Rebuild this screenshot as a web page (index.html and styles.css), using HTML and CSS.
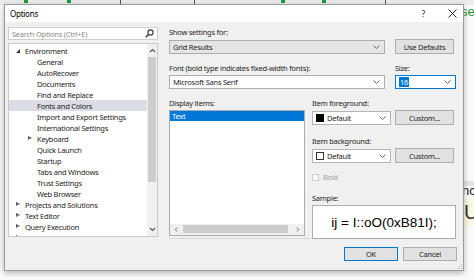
FILE: index.html
```html
<!DOCTYPE html>
<html lang="en">
<head>
  <meta charset="UTF-8">
  <title>Options</title>
  <link rel="stylesheet" href="styles.css">
</head>
<body>
  <div class="desktop">
    <!-- app behind the dialog -->
    <div class="bg-top">
      <span class="bg-mark" style="left:24px"></span>
      <span class="bg-mark" style="left:67px"></span>
      <span class="bg-line" style="left:120px"></span>
      <span class="bg-line" style="left:194px"></span>
      <span class="bg-mark" style="left:281px"></span>
      <span class="bg-mark" style="left:322px"></span>
      <span class="bg-line" style="left:385px"></span>
    </div>
    <span class="bg-se">se</span>
    <span class="bg-band"></span>
    <span class="bg-nc">nc</span>
    <span class="bg-u">U</span>

    <div class="dialog">
      <div class="titlebar">
        <span class="title">Options</span>
        <span class="help">?</span>
        <svg class="close" width="9" height="9" viewBox="0 0 9 9"><path d="M0.5 0.5L8.5 8.5M8.5 0.5L0.5 8.5" stroke="#222" stroke-width="1"/></svg>
      </div>

      <div class="content">
        <div class="nav">
          <div class="search">
            <span class="search-hint">Search Options (Ctrl+E)</span>
            <svg class="search-icon" width="9" height="9" viewBox="0 0 9 9"><circle cx="5.5" cy="3.5" r="2.6" fill="none" stroke="#333" stroke-width="1.1"/><path d="M3.6 5.4L0.8 8.2" stroke="#333" stroke-width="1.4"/></svg>
          </div>
          <div class="tree">
            <ul class="tree-list">
              <li class="lvl0"><span class="exp exp-open"></span>Environment</li>
              <li class="lvl1"><span class="exp"></span>General</li>
              <li class="lvl1"><span class="exp"></span>AutoRecover</li>
              <li class="lvl1"><span class="exp"></span>Documents</li>
              <li class="lvl1"><span class="exp"></span>Find and Replace</li>
              <li class="lvl1 selected"><span class="exp"></span>Fonts and Colors</li>
              <li class="lvl1"><span class="exp"></span>Import and Export Settings</li>
              <li class="lvl1"><span class="exp"></span>International Settings</li>
              <li class="lvl1"><span class="exp exp-closed"></span>Keyboard</li>
              <li class="lvl1"><span class="exp"></span>Quick Launch</li>
              <li class="lvl1"><span class="exp"></span>Startup</li>
              <li class="lvl1"><span class="exp"></span>Tabs and Windows</li>
              <li class="lvl1"><span class="exp"></span>Trust Settings</li>
              <li class="lvl1"><span class="exp"></span>Web Browser</li>
              <li class="lvl0"><span class="exp exp-closed"></span>Projects and Solutions</li>
              <li class="lvl0"><span class="exp exp-closed"></span>Text Editor</li>
              <li class="lvl0"><span class="exp exp-closed"></span>Query Execution</li>
              <li class="lvl0"><span class="exp exp-closed"></span>Query Results</li>
            </ul>
            <div class="vscroll">
              <svg class="arrow" width="7" height="5" viewBox="0 0 7 5"><path d="M1 4L3.5 1.5L6 4" fill="none" stroke="#555" stroke-width="1.1"/></svg>
              <div class="vtrack"><div class="vthumb"></div></div>
              <svg class="arrow" width="7" height="5" viewBox="0 0 7 5"><path d="M1 1L3.5 3.5L6 1" fill="none" stroke="#555" stroke-width="1.1"/></svg>
            </div>
          </div>
        </div>

        <div class="settings">
          <div class="label">Show settings for:</div>
          <div class="row">
            <div class="combo combo-list combo-wide">
              <span class="combo-text">Grid Results</span>
              <svg class="chev" width="7" height="4" viewBox="0 0 7 4"><path d="M0.5 0.5L3.5 3.5L6.5 0.5" fill="none" stroke="#555" stroke-width="0.9"/></svg>
            </div>
            <button class="btn">Use Defaults</button>
          </div>

          <div class="row row-labels">
            <div class="label combo-wide">Font (bold type indicates fixed-width fonts):</div>
            <div class="label">Size:</div>
          </div>
          <div class="row">
            <div class="combo combo-wide">
              <span class="combo-text">Microsoft Sans Serif</span>
              <svg class="chev" width="7" height="4" viewBox="0 0 7 4"><path d="M0.5 0.5L3.5 3.5L6.5 0.5" fill="none" stroke="#555" stroke-width="0.9"/></svg>
            </div>
            <div class="combo combo-size">
              <span class="combo-text"><span class="sel-text">16</span></span>
              <svg class="chev" width="7" height="4" viewBox="0 0 7 4"><path d="M0.5 0.5L3.5 3.5L6.5 0.5" fill="none" stroke="#555" stroke-width="0.9"/></svg>
            </div>
          </div>

          <div class="lower">
            <div class="items">
              <div class="label">Display items:</div>
              <div class="listbox">
                <div class="list-rows">
                  <div class="list-row selected">Text</div>
                </div>
                <div class="hscroll">
                  <svg width="5" height="7" viewBox="0 0 5 7"><path d="M4 1L1.5 3.5L4 6" fill="none" stroke="#555" stroke-width="1.1"/></svg>
                  <div class="htrack"><div class="hthumb"></div></div>
                  <svg width="5" height="7" viewBox="0 0 5 7"><path d="M1 1L3.5 3.5L1 6" fill="none" stroke="#555" stroke-width="1.1"/></svg>
                </div>
              </div>
              <div class="list-edge"></div>
            </div>

            <div class="colors">
              <div class="label">Item foreground:</div>
              <div class="row">
                <div class="combo combo-color">
                  <span class="swatch swatch-black"></span>
                  <span class="combo-text">Default</span>
                  <svg class="chev" width="7" height="4" viewBox="0 0 7 4"><path d="M0.5 0.5L3.5 3.5L6.5 0.5" fill="none" stroke="#555" stroke-width="0.9"/></svg>
                </div>
                <button class="btn">Custom...</button>
              </div>

              <div class="label label-gap">Item background:</div>
              <div class="row">
                <div class="combo combo-color">
                  <span class="swatch swatch-white"></span>
                  <span class="combo-text">Default</span>
                  <svg class="chev" width="7" height="4" viewBox="0 0 7 4"><path d="M0.5 0.5L3.5 3.5L6.5 0.5" fill="none" stroke="#555" stroke-width="0.9"/></svg>
                </div>
                <button class="btn">Custom...</button>
              </div>

              <label class="check">
                <span class="check-box"></span>
                <span>Bold</span>
              </label>

              <div class="label">Sample:</div>
              <div class="sample">ij = I::oO(0xB81I);</div>
            </div>
          </div>
        </div>
      </div>

      <div class="footer">
        <button class="btn btn-default">OK</button>
        <button class="btn">Cancel</button>
      </div>
      <svg class="grip" width="5" height="5" viewBox="0 0 5 5"><g fill="#b5b5b5"><rect x="4" y="0" width="1" height="1"/><rect x="2" y="2" width="1" height="1"/><rect x="4" y="2" width="1" height="1"/><rect x="0" y="4" width="1" height="1"/><rect x="2" y="4" width="1" height="1"/><rect x="4" y="4" width="1" height="1"/></g></svg>
    </div>
  </div>
</body>
</html>
```

FILE: styles.css
```css
html, body {
  margin: 0;
  padding: 0;
}

body {
  width: 474px;
  height: 280px;
  overflow: hidden;
  background-color: #fbfbfb;
  color: #1e1e1e;
  font-family: 'Noto Sans', 'Open Sans', sans-serif;
  font-size: 7.5px;
  letter-spacing: -0.25px;
}

.desktop {
  position: relative;
  width: 474px;
  height: 280px;
}

/* the window behind */
.bg-top {
  position: absolute;
  left: 0;
  top: 0;
  width: 474px;
  height: 5px;
  background-color: #ececec;
}

.bg-mark {
  position: absolute;
  top: 0;
  width: 4px;
  height: 3px;
  background-color: #1f9d3a;
}

.bg-line {
  position: absolute;
  top: 0;
  width: 1px;
  height: 5px;
  background-color: #555;
}

.bg-se {
  position: absolute;
  left: 461px;
  top: 4px;
  font-family: 'Liberation Sans', sans-serif;
  font-size: 13px;
  letter-spacing: 0;
  color: #2d9c37;
}

.bg-band {
  position: absolute;
  left: 462px;
  top: 181px;
  width: 12px;
  height: 5px;
  background-color: #e4e4e4;
}

.bg-nc {
  position: absolute;
  left: 462px;
  top: 183px;
  font-family: 'Liberation Sans', sans-serif;
  font-size: 13px;
  letter-spacing: 0;
  color: #222;
}

.bg-u {
  position: absolute;
  left: 462px;
  top: 199px;
  width: 12px;
  height: 27px;
  padding-left: 2px;
  background-color: #fafae2;
  font-family: 'Liberation Sans', sans-serif;
  font-size: 20px;
  letter-spacing: 0;
  line-height: 27px;
  color: #333;
}

/* dialog */
.dialog {
  position: absolute;
  left: 4px;
  top: 4px;
  width: 460px;
  height: 267px;
  box-sizing: border-box;
  border: 1px solid #9a9a9a;
  background-color: #f0f0f0;
  box-shadow: 0 2px 6px rgba(0, 0, 0, 0.3);
  display: flex;
  flex-direction: column;
}

.titlebar {
  height: 17px;
  flex: none;
  background-color: #fff;
  display: flex;
  align-items: center;
  padding-left: 5px;
}

.title {
  font-size: 8px;
  color: #000;
  flex: 1;
}

.help {
  font-size: 8.5px;
  color: #222;
  margin-right: 23px;
}

.close {
  margin-right: 6px;
}

.content {
  display: flex;
  gap: 11px;
  padding: 5px 7px 0 3px;
  height: 215px;
  box-sizing: border-box;
  flex: none;
}

.nav {
  width: 150px;
  display: flex;
  flex-direction: column;
  gap: 3px;
}

.search {
  height: 13px;
  box-sizing: border-box;
  border: 1px solid #cfcfcf;
  background-color: #fff;
  display: flex;
  align-items: center;
  padding: 0 3px 0 3px;
}

.search-hint {
  flex: 1;
  color: #8a8a8a;
}

.tree {
  height: 194px;
  box-sizing: border-box;
  border: 1px solid #c9c9c9;
  background-color: #fff;
  display: flex;
  overflow: hidden;
}

.tree-list {
  list-style: none;
  margin: 0;
  padding: 1px 0 0 0;
  flex: 1;
  overflow: hidden;
}

.tree-list li {
  height: 11px;
  display: flex;
  align-items: center;
  white-space: nowrap;
}

.tree-list li.selected {
  background-color: #dcdce6;
}

.lvl0 {
  padding-left: 6px;
}

.lvl1 {
  padding-left: 18px;
}

.exp {
  width: 10px;
  height: 11px;
  flex: none;
  position: relative;
}

.exp-open::before {
  content: '';
  position: absolute;
  left: 1px;
  top: 4px;
  border-style: solid;
  border-width: 0 0 4px 4px;
  border-color: transparent transparent #333 transparent;
}

.exp-closed::before {
  content: '';
  position: absolute;
  left: 1px;
  top: 3px;
  width: 0;
  height: 0;
  border-style: solid;
  border-width: 2.5px 0 2.5px 4px;
  border-color: transparent transparent transparent #555;
}

.exp-closed::after {
  content: '';
  position: absolute;
  left: 2px;
  top: 4.5px;
  border-style: solid;
  border-width: 1px 0 1px 1.6px;
  border-color: transparent transparent transparent #fff;
}

.vscroll {
  width: 10px;
  flex: none;
  background-color: #f0f0f0;
  display: flex;
  flex-direction: column;
  align-items: center;
}

.vscroll .arrow {
  flex: none;
  margin: 4px 0;
}

.vtrack {
  flex: 1;
  width: 100%;
  display: flex;
  justify-content: center;
}

.vthumb {
  width: 8px;
  height: 125px;
  background-color: #cdcdcd;
}

/* right side */
.settings {
  width: 287px;
  display: flex;
  flex-direction: column;
}

.label {
  height: 10px;
  line-height: 10px;
  white-space: nowrap;
  margin-bottom: 2px;
}

.row {
  display: flex;
  gap: 10px;
  align-items: center;
}

.row-labels {
  margin-top: 9px;
}

.combo {
  height: 14px;
  box-sizing: border-box;
  border: 1px solid #adadad;
  background-color: #fff;
  display: flex;
  align-items: center;
  padding: 0 4px 0 3px;
}

.combo-list {
  background-color: #e5e5e5;
}

.combo-wide {
  width: 216px;
  flex: none;
}

.combo-size {
  width: 61px;
  border-color: #0078d7;
}

.combo-text {
  flex: 1;
  white-space: nowrap;
}

.sel-text {
  background-color: #0078d7;
  color: #fff;
  padding: 0 1px;
}

.chev {
  flex: none;
}

.btn {
  width: 59px;
  height: 15px;
  box-sizing: border-box;
  border: 1px solid #adadad;
  background-color: #e1e1e1;
  font-family: inherit;
  font-size: 7.5px;
  letter-spacing: -0.25px;
  color: #1e1e1e;
  padding: 0;
}

.btn-default {
  width: 54px;
  border-color: #0078d7;
}

.lower {
  display: flex;
  gap: 7px;
  margin-top: 9px;
}

.items {
  width: 136px;
  display: flex;
  flex-direction: column;
}

.listbox {
  height: 126px;
  box-sizing: border-box;
  border: 1px solid #acacac;
  background-color: #fff;
  display: flex;
  flex-direction: column;
}

.list-rows {
  flex: 1;
}

.list-row {
  height: 10px;
  line-height: 10px;
  padding-left: 2px;
}

.list-row.selected {
  background-color: #0078d7;
  color: #fff;
}

.hscroll {
  height: 10px;
  background-color: #f0f0f0;
  display: flex;
  align-items: center;
  gap: 3px;
  padding: 0 4px 1px 4px;
}

.htrack {
  flex: 1;
  height: 8px;
  display: flex;
  align-items: center;
  padding: 0 5px 0 2px;
}

.hthumb {
  width: 105px;
  height: 8px;
  background-color: #cdcdcd;
}

.list-edge {
  height: 1px;
  margin-top: 2px;
  margin-right: -6px;
  background-color: #d9d9d9;
}

.colors {
  width: 144px;
  display: flex;
  flex-direction: column;
}

.colors .row {
  gap: 4px;
}

.combo-color {
  width: 79px;
  flex: none;
  border-color: #b4b4b4;
  padding-left: 3px;
}

.swatch {
  width: 8px;
  height: 8px;
  box-sizing: border-box;
  margin-right: 3px;
  flex: none;
}

.swatch-black {
  background-color: #000;
}

.swatch-white {
  background-color: #fff;
  border: 1px solid #333;
}

.label-gap {
  margin-top: 11px;
}

.check {
  display: flex;
  align-items: center;
  gap: 4px;
  height: 10px;
  margin-top: 9px;
  margin-bottom: 11px;
  color: #a0a0a0;
}

.check-box {
  width: 7px;
  height: 7px;
  box-sizing: border-box;
  border: 1px solid #cccccc;
  background-color: #fcfcfc;
}

.sample {
  height: 34px;
  box-sizing: border-box;
  border: 1px solid #adadad;
  background-color: #fff;
  display: flex;
  align-items: center;
  justify-content: center;
  font-family: 'Liberation Sans', Arial, sans-serif;
  font-size: 13.5px;
  letter-spacing: 0;
  color: #000;
}

.footer {
  display: flex;
  justify-content: flex-end;
  gap: 5px;
  padding: 10px 6px 0 0;
}

.footer .btn {
  width: 54px;
  height: 14px;
}

.grip {
  position: absolute;
  right: 1px;
  bottom: 1px;
}
```
